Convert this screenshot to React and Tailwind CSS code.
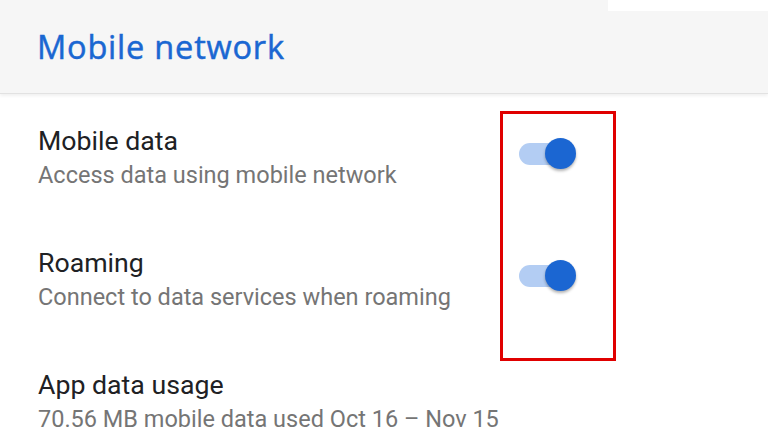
import React from "react";

const rows = [
  { title: "Mobile data", sub: "Access data using mobile network", toggle: true },
  { title: "Roaming", sub: "Connect to data services when roaming", toggle: true },
  { title: "App data usage", sub: "70.56 MB mobile data used Oct 16 – Nov 15", toggle: false },
];

function Toggle() {
  return (
    <div className="relative mt-[13px] w-[57px] h-[31px] flex items-center">
      <div className="w-[44px] h-[22px] rounded-full bg-[#b3cdf3]" />
      <div className="absolute right-0 top-0 w-[31px] h-[31px] rounded-full bg-[#1b66d2] shadow-[0_2px_3px_rgba(0,0,0,0.3)]" />
    </div>
  );
}

export default function App() {
  return (
    <div
      className="relative w-[768px] h-[432px] overflow-hidden bg-white"
      style={{ fontFamily: "Roboto, 'Liberation Sans', sans-serif" }}
    >
      <header className="relative h-[94px] bg-[#f6f6f6] border-b border-[#e2e2e2] shadow-[0_2px_3px_rgba(0,0,0,0.06)]">
        <div className="absolute right-0 top-0 w-[160px] h-[11px] bg-white" />
        <h1
          className="pl-[37px] pt-[28px] text-[32.5px] leading-[38px] tracking-[0.8px] [-webkit-text-stroke:0.5px_#1a67d2] text-[#1a67d2]"
          style={{ fontFamily: "'Open Sans', sans-serif" }}
        >
          Mobile network
        </h1>
      </header>

      <div className="pt-[31px] flex flex-col gap-[56px]">
        {rows.map((r) => (
          <div key={r.title} className="flex items-start pl-[38px]">
            <div className="w-[481px]">
              <div className="text-[26.7px] leading-[32px] text-[#202124]">{r.title}</div>
              <div className="mt-[2px] text-[23.5px] leading-[32px] text-[#757575] whitespace-nowrap">
                {r.sub}
              </div>
            </div>
            {r.toggle && <Toggle />}
          </div>
        ))}
      </div>

      {/* annotation box */}
      <div className="absolute left-[500px] top-[111px] w-[116px] h-[250px] border-[3px] border-[#e00000]" />
    </div>
  );
}
